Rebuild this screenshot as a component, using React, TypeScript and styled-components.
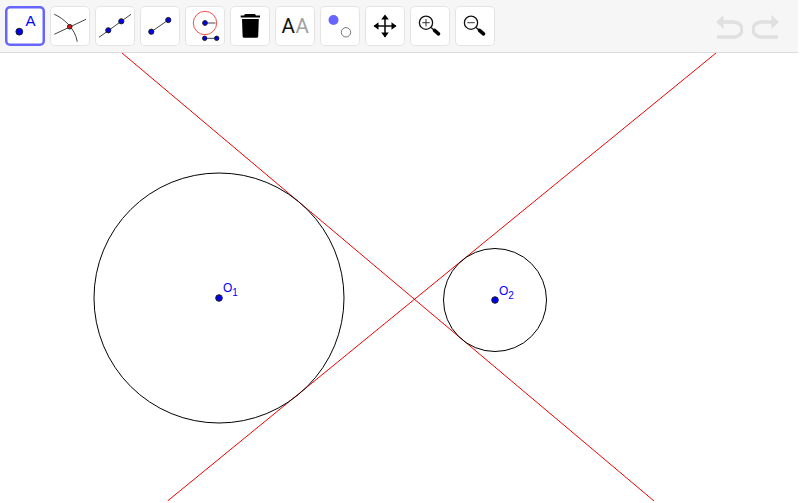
import styled, {createGlobalStyle} from 'styled-components';
import type {ReactNode} from 'react';

const BLUE = '#0000f0';

const Dot = ({x, y, r = 3, fill = BLUE}: {x: number; y: number; r?: number; fill?: string}) => (
  <circle cx={x} cy={y} r={r} fill={fill} stroke="#222" strokeWidth="1" />
);

function IconText({x, y, fontSize, fill, family = "'Liberation Sans', Arial, sans-serif", children}: {x: number; y: number; fontSize: number; fill: string; family?: string; children: ReactNode}) {
  return (
    <text x={x} y={y} fontSize={fontSize} fill={fill} fontFamily={family}>
      {children}
    </text>
  );
}

const tools: {id: string; icon: ReactNode; active?: boolean}[] = [
  {
    id: 'point',
    active: true,
    icon: (
      <>
        <Dot x={14.3} y={25.7} r={3.4} />
        <IconText x={20.5} y={19.5} fontSize={15} fill="#0000ff">A</IconText>
      </>
    ),
  },
  {
    id: 'intersect',
    icon: (
      <>
        <path d="M4.3 28.3 36 13.3" stroke="#444" fill="none" />
        <path d="M4.3 8.3C13 12 25 22 27.3 35.7" stroke="#444" fill="none" />
        <Dot x={19.7} y={20.7} r={2.3} fill="#e01010" />
      </>
    ),
  },
  {
    id: 'line',
    icon: (
      <>
        <path d="M4 31.3 36 8.3" stroke="#444" fill="none" />
        <Dot x={13.3} y={24.3} r={2.6} />
        <Dot x={26.3} y={15.3} r={2.6} />
      </>
    ),
  },
  {
    id: 'segment',
    icon: (
      <>
        <path d="M11.3 25.7 28.3 14" stroke="#444" fill="none" />
        <Dot x={11.3} y={25.7} r={2.6} />
        <Dot x={28.3} y={14} r={2.6} />
      </>
    ),
  },
  {
    id: 'compass',
    icon: (
      <>
        <circle cx="20" cy="17" r="11.7" fill="#fff" stroke="#f05050" />
        <path d="M20 17H30.5" stroke="#444" fill="none" />
        <Dot x={20} y={17} r={2.4} />
        <path d="M19.7 32.3H31.7" stroke="#444" fill="none" />
        <Dot x={19.7} y={32.3} r={2.2} />
        <Dot x={31.7} y={32.3} r={2.2} />
      </>
    ),
  },
  {
    id: 'delete',
    icon: (
      <>
        <path d="M15 8h10l1 1.500h4v2H10.700v-2h3.300z" fill="#000" />
        <path d="M12 13h16.800l-.6 17.200a1.600 1.600 0 0 1-1.600 1.500H14.200a1.600 1.600 0 0 1-1.600-1.500z" fill="#000" />
      </>
    ),
  },
  {
    id: 'text',
    icon: (
      <>
        <IconText x={6.5} y={27} fontSize={20.5} fill="#111" family="Roboto, sans-serif">A</IconText>
        <IconText x={20.5} y={27} fontSize={20.5} fill="#a0a0a0" family="Roboto, sans-serif">A</IconText>
      </>
    ),
  },
  {
    id: 'style',
    icon: (
      <>
        <circle cx="13.500" cy="14" r="5" fill="#6666ff" />
        <circle cx="26" cy="26.300" r="4.700" fill="#fff" stroke="#777" />
      </>
    ),
  },
  {
    id: 'move',
    icon: (
      <>
        <path d="M20 11V31M9 20H31" stroke="#111" strokeWidth="1.600" fill="none" />
        <path d="M20 8.500 23.800 13.500H16.200zM20 31.500 23.800 26.500H16.200zM8.500 20 13.500 16.200V23.800zM31.500 20 26.500 16.200V23.800z" fill="#000" />
      </>
    ),
  },
  {
    id: 'zoom-in',
    icon: (
      <>
        <circle cx="16" cy="16.700" r="6.600" fill="#fff" stroke="#111" strokeWidth="1.300" />
        <path d="M12.300 16.700H19.700M16 13V20.400" stroke="#333" fill="none" />
        <path d="M21 21.500 24 24" stroke="#111" strokeWidth="1.400" fill="none" />
        <path d="M24.500 24.300 28.500 27.800" stroke="#000" strokeWidth="3.600" strokeLinecap="round" fill="none" />
      </>
    ),
  },
  {
    id: 'zoom-out',
    icon: (
      <>
        <circle cx="16" cy="16.700" r="6.600" fill="#fff" stroke="#111" strokeWidth="1.300" />
        <path d="M12.300 16.700H19.700" stroke="#333" fill="none" />
        <path d="M21 21.500 24 24" stroke="#111" strokeWidth="1.400" fill="none" />
        <path d="M24.500 24.300 28.500 27.800" stroke="#000" strokeWidth="3.600" strokeLinecap="round" fill="none" />
      </>
    ),
  },
];

const App = (): JSX.Element => {
  return (
    <Page>
      <GlobalStyle />
      <Toolbar>
        <ToolGroup>
          {tools.map((tool) => (
            <ToolButton key={tool.id} $active={tool.active}>
              <svg width="40" height="40" viewBox="0 0 40 40">{tool.icon}</svg>
            </ToolButton>
          ))}
        </ToolGroup>
        <HistoryGroup>
          <svg width="27" height="30" viewBox="0 0 27 30">
            <path d="M6 11H17C29 11 29 26 17 26H1" stroke="#e0e0e0" strokeWidth="3.400" fill="none" />
            <path d="M0 11 7.500 4V18z" fill="#e0e0e0" />
          </svg>
          <svg width="27" height="30" viewBox="0 0 27 30">
            <path d="M21 11H10C-2 11 -2 26 10 26H26" stroke="#e0e0e0" strokeWidth="3.400" fill="none" />
            <path d="M27 11 19.500 4V18z" fill="#e0e0e0" />
          </svg>
        </HistoryGroup>
      </Toolbar>
      <Canvas>
        <svg width="800" height="448" viewBox="0 53 800 448">
          <line x1="122" y1="53" x2="654" y2="501" stroke="#f00000" />
          <line x1="716" y1="53" x2="167.500" y2="501" stroke="#f00000" />
          <circle cx="219" cy="298" r="125" fill="none" stroke="#000" />
          <circle cx="495" cy="300" r="51.500" fill="none" stroke="#000" />
          <Dot x={219} y={298} r={3.300} />
          <Dot x={495} y={300} r={3.300} />
        </svg>
        <PointLabel $x={223} $y={281}>O<sub>1</sub></PointLabel>
        <PointLabel $x={499} $y={284}>O<sub>2</sub></PointLabel>
      </Canvas>
    </Page>
  );
};

export default App;

const GlobalStyle = createGlobalStyle`
  html, body {
    margin: 0;
    background: #fff;
  }
`;

const Page = styled.div`
  width: 800px;
  height: 503px;
  overflow: hidden;
  font-family: 'Liberation Sans', Arial, sans-serif;
  background: #fff;
`;

const Toolbar = styled.header`
  box-sizing: border-box;
  width: 798px;
  height: 53px;
  padding: 6px 19px 0 5px;
  display: flex;
  justify-content: space-between;
  background: #f6f6f6;
  border-bottom: 1px solid #dcdcdc;
`;

const ToolGroup = styled.div`
  display: flex;
  gap: 5px;
  align-items: flex-start;
`;

const ToolButton = styled.button<{$active?: boolean}>`
  box-sizing: border-box;
  width: 40px;
  height: 40px;
  padding: 0;
  background: #fff;
  border: none;
  border-radius: 5px;
  box-shadow: ${(p) => (p.$active ? 'inset 0 0 0 2.5px #6666ff' : 'inset 0 0 0 1px #e4e4e4')};

  & > svg {
    display: block;
  }
`;

const HistoryGroup = styled.div`
  display: flex;
  gap: 9px;
  padding-top: 5px;
  align-items: flex-start;
`;

const Canvas = styled.main`
  position: relative;
  height: 448px;

  & > svg {
    display: block;
  }
`;

const PointLabel = styled.span<{$x: number; $y: number}>`
  position: absolute;
  left: ${(p) => p.$x}px;
  top: ${(p) => p.$y - 53}px;
  font-size: 12px;
  line-height: 14px;
  color: #0000ff;

  & > sub {
    font-size: 10px;
    line-height: 0;
    vertical-align: -4px;
  }
`;
